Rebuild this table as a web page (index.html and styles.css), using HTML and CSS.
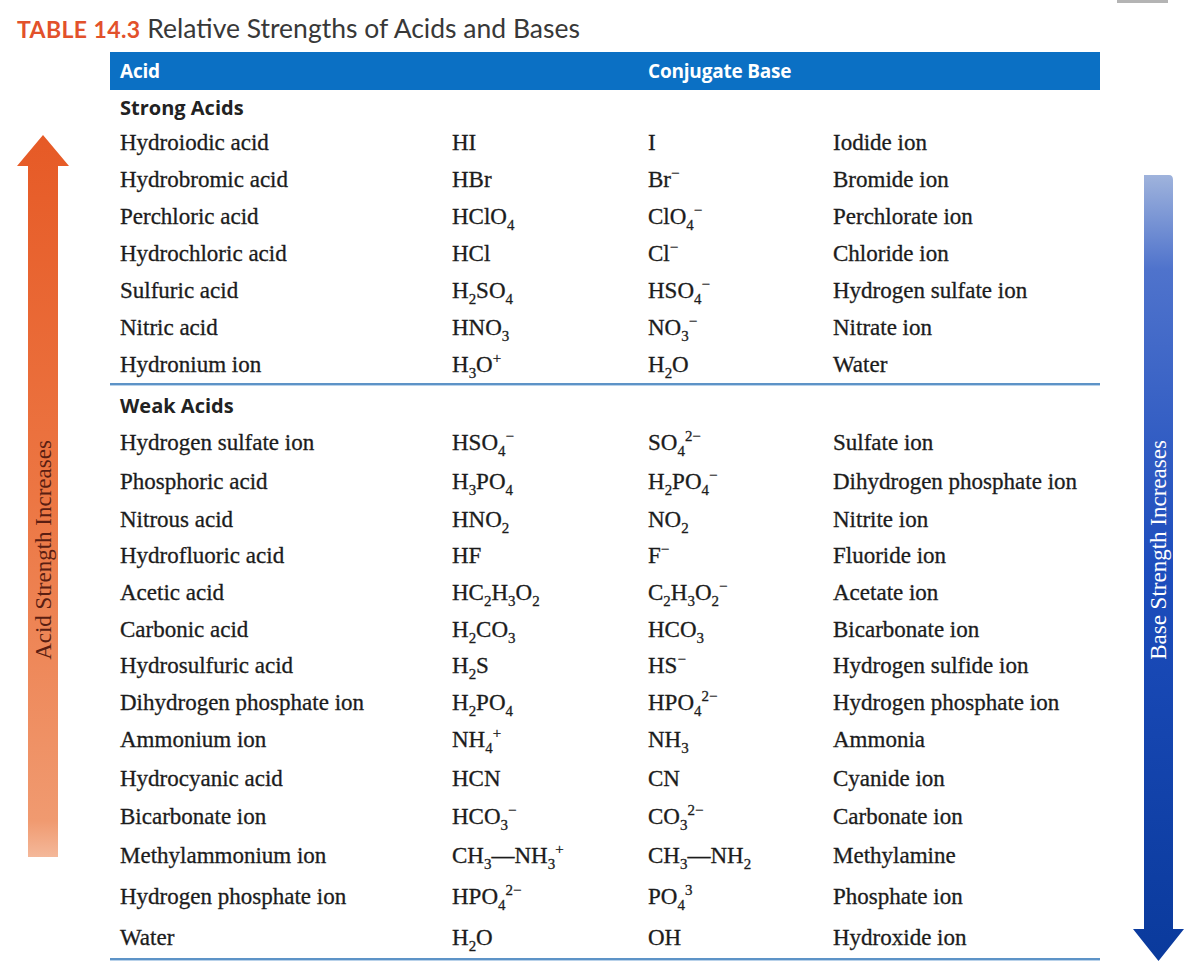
FILE: index.html
```html
<!DOCTYPE html>
<html lang="en">
  <head>
    <meta charset="UTF-8" />
    <meta name="viewport" content="width=device-width" />
    <title>Table 14.3 - Relative Strengths of Acids and Bases</title>
    <link rel="stylesheet" href="styles.css">
  </head>
  <body>
    <div class="corner-mark"></div>
    <h1 class="title"><span class="label">TABLE 14.3</span> Relative Strengths of Acids and Bases</h1>

    <div class="layout">
      <!-- acid strength arrow, points up -->
      <div class="side side-left">
        <svg class="arrow" width="110" height="730" viewBox="0 0 110 730">
          <defs>
            <linearGradient id="acidGrad" x1="0" y1="0" x2="0" y2="1">
              <stop offset="0" stop-color="#e65a26" />
              <stop offset="0.5" stop-color="#ec7643" />
              <stop offset="0.95" stop-color="#f09a70" />
              <stop offset="1" stop-color="#f4b89a" />
            </linearGradient>
          </defs>
          <polygon points="43,0 69,31 58,31 58,722 28,722 28,31 17,31" fill="url(#acidGrad)" />
          <text class="arrow-text acid-text" x="43" y="415" transform="rotate(-90 43 415)">Acid Strength Increases</text>
        </svg>
      </div>

      <div class="table">
        <div class="head-bar">
          <span class="head-acid">Acid</span>
          <span class="head-base">Conjugate Base</span>
        </div>

        <div class="section-title">Strong Acids</div>
        <div class="row"><span>Hydroiodic acid</span><span>HI</span><span>I</span><span>Iodide ion</span></div>
        <div class="row"><span>Hydrobromic acid</span><span>HBr</span><span>Br<sup>−</sup></span><span>Bromide ion</span></div>
        <div class="row"><span>Perchloric acid</span><span>HClO<sub>4</sub></span><span>ClO<sub>4</sub><sup>−</sup></span><span>Perchlorate ion</span></div>
        <div class="row"><span>Hydrochloric acid</span><span>HCl</span><span>Cl<sup>−</sup></span><span>Chloride ion</span></div>
        <div class="row"><span>Sulfuric acid</span><span>H<sub>2</sub>SO<sub>4</sub></span><span>HSO<sub>4</sub><sup>−</sup></span><span>Hydrogen sulfate ion</span></div>
        <div class="row"><span>Nitric acid</span><span>HNO<sub>3</sub></span><span>NO<sub>3</sub><sup>−</sup></span><span>Nitrate ion</span></div>
        <div class="row"><span>Hydronium ion</span><span>H<sub>3</sub>O<sup>+</sup></span><span>H<sub>2</sub>O</span><span>Water</span></div>

        <div class="divider"></div>

        <div class="section-title weak">Weak Acids</div>
        <div class="row r38"><span>Hydrogen sulfate ion</span><span>HSO<sub>4</sub><sup>−</sup></span><span>SO<sub>4</sub><sup>2−</sup></span><span>Sulfate ion</span></div>
        <div class="row r40"><span>Phosphoric acid</span><span>H<sub>3</sub>PO<sub>4</sub></span><span>H<sub>2</sub>PO<sub>4</sub><sup>−</sup></span><span>Dihydrogen phosphate ion</span></div>
        <div class="row r36"><span>Nitrous acid</span><span>HNO<sub>2</sub></span><span>NO<sub>2</sub></span><span>Nitrite ion</span></div>
        <div class="row r36"><span>Hydrofluoric acid</span><span>HF</span><span>F<sup>−</sup></span><span>Fluoride ion</span></div>
        <div class="row"><span>Acetic acid</span><span>HC<sub>2</sub>H<sub>3</sub>O<sub>2</sub></span><span>C<sub>2</sub>H<sub>3</sub>O<sub>2</sub><sup>−</sup></span><span>Acetate ion</span></div>
        <div class="row"><span>Carbonic acid</span><span>H<sub>2</sub>CO<sub>3</sub></span><span>HCO<sub>3</sub></span><span>Bicarbonate ion</span></div>
        <div class="row r36"><span>Hydrosulfuric acid</span><span>H<sub>2</sub>S</span><span>HS<sup>−</sup></span><span>Hydrogen sulfide ion</span></div>
        <div class="row"><span>Dihydrogen phosphate ion</span><span>H<sub>2</sub>PO<sub>4</sub></span><span>HPO<sub>4</sub><sup>2−</sup></span><span>Hydrogen phosphate ion</span></div>
        <div class="row r38"><span>Ammonium ion</span><span>NH<sub>4</sub><sup>+</sup></span><span>NH<sub>3</sub></span><span>Ammonia</span></div>
        <div class="row r39"><span>Hydrocyanic acid</span><span>HCN</span><span>CN</span><span>Cyanide ion</span></div>
        <div class="row"><span>Bicarbonate ion</span><span>HCO<sub>3</sub><sup>−</sup></span><span>CO<sub>3</sub><sup>2−</sup></span><span>Carbonate ion</span></div>
        <div class="row r41"><span>Methylammonium ion</span><span>CH<sub>3</sub>—NH<sub>3</sub><sup>+</sup></span><span>CH<sub>3</sub>—NH<sub>2</sub></span><span>Methylamine</span></div>
        <div class="row r41"><span>Hydrogen phosphate ion</span><span>HPO<sub>4</sub><sup>2−</sup></span><span>PO<sub>4</sub><sup>3</sup></span><span>Phosphate ion</span></div>
        <div class="row r41"><span>Water</span><span>H<sub>2</sub>O</span><span>OH</span><span>Hydroxide ion</span></div>

        <div class="divider bottom"></div>
      </div>

      <!-- base strength arrow, points down -->
      <div class="side side-right">
        <svg class="arrow" width="100" height="786" viewBox="0 0 100 786">
          <defs>
            <linearGradient id="baseGrad" x1="0" y1="0" x2="0" y2="1">
              <stop offset="0" stop-color="#9fb3dc" />
              <stop offset="0.12" stop-color="#4f73cc" />
              <stop offset="0.5" stop-color="#1d4dbd" />
              <stop offset="1" stop-color="#0a3a9c" />
            </linearGradient>
          </defs>
          <path d="M44,0 H69 Q73,0 73,5 V754 H84 L58.5,786 L33,754 H44 Z" fill="url(#baseGrad)" />
          <text class="arrow-text base-text" x="58.5" y="375" transform="rotate(-90 58.5 375)">Base Strength Increases</text>
        </svg>
      </div>
    </div>
  </body>
</html>
```

FILE: styles.css
```css
body {
  margin: 0;
  background-color: #fff;
  font-family: "Liberation Serif", "Times New Roman", serif;
  color: #1c1c1c;
}

.corner-mark {
  width: 51px;
  height: 3px;
  margin-left: 1117px;
  background-color: #b4b4b4;
}

.title {
  margin: 0 0 9px 0;
  padding: 10px 17px 0;
  height: 30px;
  line-height: 30px;
  font-family: Lato, "Open Sans", sans-serif;
  font-weight: normal;
  font-size: 26.5px;
  color: #383838;
}

.title .label {
  font-weight: bold;
  font-size: 23px;
  letter-spacing: 0.4px;
  color: #e2512b;
}

.layout {
  display: grid;
  grid-template-columns: 110px 990px 100px;
}

.side-left {
  padding-top: 83px;
}

.side-right {
  padding-top: 123px;
}

.arrow {
  display: block;
}

.arrow-text {
  font-family: "Liberation Serif", serif;
  font-size: 23px;
  text-anchor: middle;
  dominant-baseline: central;
}

.acid-text {
  fill: #5a1e12;
}

.base-text {
  fill: #fff;
}

.head-bar {
  display: grid;
  grid-template-columns: 528px 1fr;
  align-items: center;
  height: 38px;
  padding-left: 10px;
  background-color: #0b70c4;
  color: #fff;
  font-family: "Open Sans", sans-serif;
  font-weight: bold;
  font-size: 19px;
  letter-spacing: -0.2px;
}

.section-title {
  display: flex;
  align-items: center;
  height: 34px;
  padding-left: 10px;
  font-family: "Open Sans", sans-serif;
  font-weight: bold;
  font-size: 20px;
  color: #222;
}

.section-title.weak {
  height: 38px;
}

.row {
  display: grid;
  grid-template-columns: 332px 196px 185px 1fr;
  align-items: center;
  height: 37px;
  padding-left: 10px;
  font-size: 23px;
  -webkit-text-stroke: 0.3px #1c1c1c;
}

.row.r36 { height: 36px; }
.row.r38 { height: 38px; }
.row.r39 { height: 39px; }
.row.r40 { height: 40px; }
.row.r41 { height: 41px; }

sub,
sup {
  font-size: 0.65em;
  line-height: 0;
}

.divider {
  height: 3px;
  background-color: #5d93c7;
  border-bottom: 1px solid #b9d2ea;
  box-sizing: border-box;
}
```
